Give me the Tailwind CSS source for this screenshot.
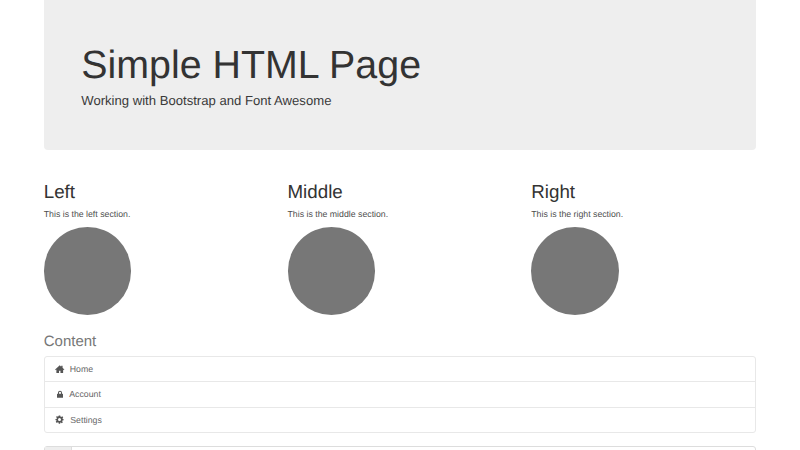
<!DOCTYPE html>
<html>
<head>
<meta charset="utf-8">
<script src="https://cdn.jsdelivr.net/npm/@tailwindcss/browser@4"></script>
</head>
<body class="bg-white font-['Liberation_Sans',Arial,sans-serif] text-[#333] overflow-hidden h-[450px] [text-rendering:geometricPrecision]">
<div class="ml-[43.75px] w-[712.5px]">
  <header class="h-[150px] bg-[#eee] rounded-b-[4px] pl-[37.5px] pt-[39px]">
    <h1 class="text-[39.375px] leading-[52px]">Simple HTML Page</h1>
    <p class="text-[13.125px] leading-[20px] font-light text-[#3a3a3a]">Working with Bootstrap and Font Awesome</p>
  </header>
  <section class="grid grid-cols-[243.75px_243.75px_1fr] mt-[30px]">
    <div>
      <h3 class="text-[18.75px] leading-[24px]">Left</h3>
      <p class="text-[8.75px] leading-[14px] mt-[3px] text-[#4d4d4d]">This is the left section.</p>
      <div class="w-[87.5px] h-[87.5px] rounded-full bg-[#777] mt-[6px]"></div>
    </div>
    <div>
      <h3 class="text-[18.75px] leading-[24px]">Middle</h3>
      <p class="text-[8.75px] leading-[14px] mt-[3px] text-[#4d4d4d]">This is the middle section.</p>
      <div class="w-[87.5px] h-[87.5px] rounded-full bg-[#777] mt-[6px]"></div>
    </div>
    <div>
      <h3 class="text-[18.75px] leading-[24px]">Right</h3>
      <p class="text-[8.75px] leading-[14px] mt-[3px] text-[#4d4d4d]">This is the right section.</p>
      <div class="w-[87.5px] h-[87.5px] rounded-full bg-[#777] mt-[6px]"></div>
    </div>
  </section>
  <h4 class="text-[15px] leading-[20px] text-[#777] mt-[17px]">Content</h4>
  <ul class="mt-[4px] border border-[#e8e8e8] rounded-[3px] text-[8.75px] text-[#666]">
    <li class="h-[25.5px] flex items-center pl-[10.5px] border-b border-[#e8e8e8]">
      <svg class="w-[9.500px] h-[8.500px] fill-[#555] mr-[5px]" viewBox="0 0 26 24"><path d="M13 1 0 12.500 1.500 14.500 3.500 13V23h7.500v-6.500h4V23h7.500V13l2 1.500 1.500-2-5-4.400V2h-4v2.600z"/></svg>
      <span class="pt-[1px]">Home</span>
    </li>
    <li class="h-[25.5px] flex items-center pl-[11px] border-b border-[#e8e8e8]">
      <svg class="w-[8px] h-[9px] fill-[#555] mr-[5.5px]" viewBox="0 0 24 24"><path d="M4 10h2V7a6 6 0 0 1 12 0v3h2a1 1 0 0 1 1 1v10a1 1 0 0 1-1 1H4a1 1 0 0 1-1-1V11a1 1 0 0 1 1-1zm5 0h6V7a3 3 0 0 0-6 0z"/></svg>
      <span class="pt-[1px]">Account</span>
    </li>
    <li class="h-[24.5px] flex items-center pl-[10.5px]">
      <svg class="w-[9px] h-[9px] fill-[#555] mr-[6px]" viewBox="0 0 24 24"><path fill-rule="evenodd" d="M10 1h4l.6 3.200 1.900.8 2.700-1.900 2.800 2.800-1.900 2.700.8 1.900L23 11v3l-3.100.6-.8 1.900 1.900 2.700-2.800 2.800-2.700-1.900-1.900.8L14 23h-4l-.6-3.100-1.900-.8-2.700 1.900L2 18.200l1.900-2.700-.8-1.900L1 14v-3l3.100-.6.8-1.900L3 4.800 4.800 3l2.700 1.100 1.900-.8zM12 8a4 4 0 1 0 0 8 4 4 0 0 0 0-8z"/></svg>
      <span class="pt-[1px]">Settings</span>
    </li>
  </ul>
  <div class="mt-[13px] h-[30px] border border-[#ddd] rounded-[3px] flex">
    <div class="w-[27px] bg-[#eee] border-r border-[#ddd]"></div>
  </div>
</div>
</body>
</html>
